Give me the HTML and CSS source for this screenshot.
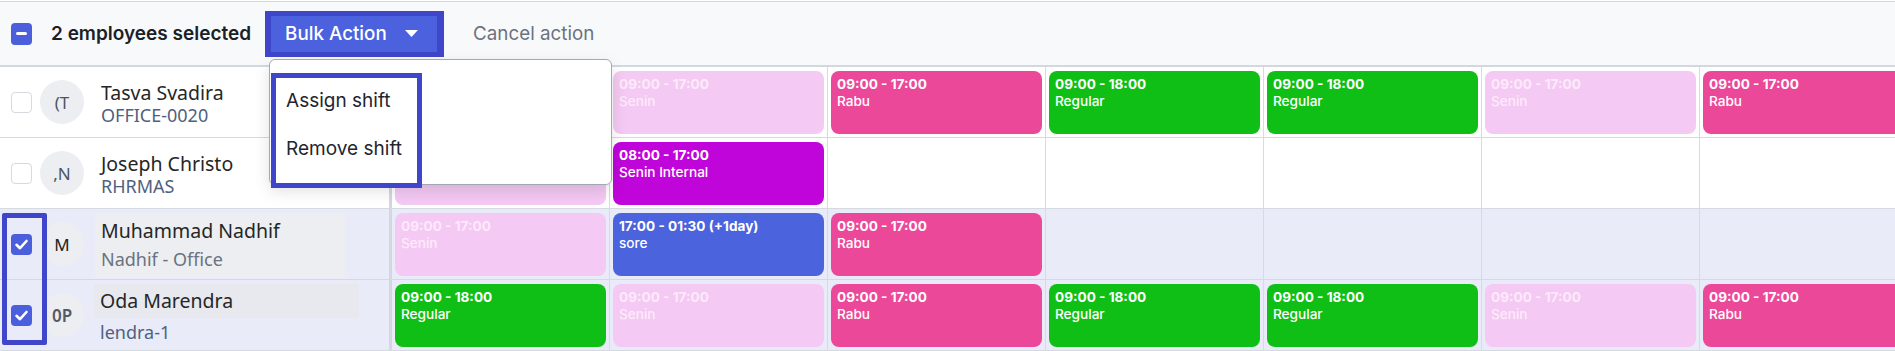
FILE: index.html
```html
<!DOCTYPE html>
<html lang="en">
<head>
<meta charset="utf-8">
<title>Shift schedule</title>
<link rel="stylesheet" href="styles.css">
</head>
<body>
<div class="app">
  <div class="toolbar">
    <span class="cb cb-ind"><span class="dash"></span></span>
    <span class="sel-count">2 employees selected</span>
    <div class="bulk">
      <button class="bulk-btn">Bulk Action
        <svg class="caret" width="13" height="7" viewBox="0 0 13 7"><path d="M0 0 H13 L6.5 7 Z" fill="#fff"/></svg>
      </button>
      <div class="menu">
        <div class="menu-mark">
          <div class="menu-item">Assign shift</div>
          <div class="menu-item">Remove shift</div>
        </div>
      </div>
    </div>
    <span class="cancel">Cancel action</span>
  </div>

  <div class="rows">
    <div class="row">
      <div class="emp">
        <span class="cb"></span>
        <span class="avatar">(T</span>
        <div class="info">
          <div class="name">Tasva Svadira</div>
          <div class="sub">OFFICE-0020</div>
        </div>
      </div>
      <div class="day"><div class="shift light"><b>09:00 - 17:00</b><span>Senin</span></div></div>
      <div class="day"><div class="shift light"><b>09:00 - 17:00</b><span>Senin</span></div></div>
      <div class="day"><div class="shift hot"><b>09:00 - 17:00</b><span>Rabu</span></div></div>
      <div class="day"><div class="shift green"><b>09:00 - 18:00</b><span>Regular</span></div></div>
      <div class="day"><div class="shift green"><b>09:00 - 18:00</b><span>Regular</span></div></div>
      <div class="day"><div class="shift light"><b>09:00 - 17:00</b><span>Senin</span></div></div>
      <div class="day"><div class="shift hot"><b>09:00 - 17:00</b><span>Rabu</span></div></div>
    </div>

    <div class="row">
      <div class="emp">
        <span class="cb"></span>
        <span class="avatar">,N</span>
        <div class="info">
          <div class="name">Joseph Christo</div>
          <div class="sub">RHRMAS</div>
        </div>
      </div>
      <div class="day"><div class="shift light"><b>09:00 - 17:00</b><span>Senin</span></div></div>
      <div class="day"><div class="shift purple"><b>08:00 - 17:00</b><span>Senin Internal</span></div></div>
      <div class="day"></div>
      <div class="day"></div>
      <div class="day"></div>
      <div class="day"></div>
      <div class="day"></div>
    </div>

    <div class="row selected">
      <div class="emp">
        <span class="cb checked"><svg width="21" height="21" viewBox="0 0 21 21"><path d="M5.5 10.8 L9 14.2 L15.5 7" fill="none" stroke="#fff" stroke-width="2.6" stroke-linecap="round" stroke-linejoin="round"/></svg></span>
        <span class="avatar dark">M</span>
        <div class="info info-box">
          <div class="name">Muhammad Nadhif</div>
          <div class="sub sub-gap">Nadhif - Office</div>
        </div>
      </div>
      <div class="day"><div class="shift light"><b>09:00 - 17:00</b><span>Senin</span></div></div>
      <div class="day"><div class="shift blue"><b>17:00 - 01:30 (+1day)</b><span>sore</span></div></div>
      <div class="day"><div class="shift hot"><b>09:00 - 17:00</b><span>Rabu</span></div></div>
      <div class="day"></div>
      <div class="day"></div>
      <div class="day"></div>
      <div class="day"></div>
    </div>

    <div class="row selected">
      <div class="emp">
        <span class="cb checked"><svg width="21" height="21" viewBox="0 0 21 21"><path d="M5.5 10.8 L9 14.2 L15.5 7" fill="none" stroke="#fff" stroke-width="2.6" stroke-linecap="round" stroke-linejoin="round"/></svg></span>
        <span class="avatar bold">0P</span>
        <div class="info info-top">
          <div class="name name-box">Oda Marendra</div>
          <div class="sub sub-pad">lendra-1</div>
        </div>
      </div>
      <div class="day"><div class="shift green"><b>09:00 - 18:00</b><span>Regular</span></div></div>
      <div class="day"><div class="shift light"><b>09:00 - 17:00</b><span>Senin</span></div></div>
      <div class="day"><div class="shift hot"><b>09:00 - 17:00</b><span>Rabu</span></div></div>
      <div class="day"><div class="shift green"><b>09:00 - 18:00</b><span>Regular</span></div></div>
      <div class="day"><div class="shift green"><b>09:00 - 18:00</b><span>Regular</span></div></div>
      <div class="day"><div class="shift light"><b>09:00 - 17:00</b><span>Senin</span></div></div>
      <div class="day"><div class="shift hot"><b>09:00 - 17:00</b><span>Rabu</span></div></div>
    </div>

    <div class="cb-mark"></div>
  </div>
</div>
</body>
</html>
```

FILE: styles.css
```css
* { box-sizing: border-box; }
html, body { margin: 0; padding: 0; }
body {
  width: 1895px;
  height: 351px;
  overflow: hidden;
  background: #ffffff;
  font-family: Inter, "Liberation Sans", sans-serif;
  color: #1f2530;
}
.app { width: 1895px; }

/* toolbar */
.toolbar {
  margin-top: 1px;
  height: 66px;
  border-top: 1px solid #d6d8db;
  border-bottom: 2px solid #d3d8df;
  background: #f8f9fb;
  display: flex;
  align-items: center;
  padding-left: 11px;
  position: relative;
  z-index: 5;
}
.cb {
  width: 21px;
  height: 21px;
  flex: 0 0 21px;
  border: 1.5px solid #d6d9de;
  border-radius: 4px;
  background: #fff;
  display: flex;
  align-items: center;
  justify-content: center;
}
.cb-ind {
  height: 22px;
  border: none;
  background: #4b5fdc;
}
.cb-ind .dash {
  width: 11px;
  height: 3px;
  border-radius: 2px;
  background: #fff;
}
.cb.checked {
  border: none;
  background: #4b5fdc;
}
.sel-count {
  margin-left: 19px;
  font-size: 19px;
  font-weight: 600;
  color: #1b1f27;
}
.bulk {
  margin-left: 14px;
  position: relative;
}
.bulk-btn {
  width: 179px;
  height: 46px;
  border: 5px solid #3f46c9;
  border-left-width: 6px;
  border-right-width: 7px;
  background: #4c61dd;
  color: #fff;
  font-family: Inter, "Liberation Sans", sans-serif;
  font-size: 18.8px;
  font-weight: 500;
  display: flex;
  align-items: center;
  padding: 0 0 0 14px;
  margin: 0;
}
.caret { margin-left: 18px; }
.cancel {
  margin-left: 29px;
  font-size: 18.8px;
  color: #6b7280;
}

/* dropdown */
.menu {
  position: absolute;
  left: 4px;
  top: 48px;
  width: 343px;
  height: 126px;
  background: #fff;
  border: 1px solid #a3a9b3;
  border-radius: 6px;
  box-shadow: 0 6px 16px rgba(0, 0, 0, 0.12);
}
.menu-mark {
  margin-top: 13px;
  margin-left: 1px;
  width: 151px;
  height: 115px;
  border: 5px solid #3f46c9;
  padding-left: 10px;
}
.menu-item {
  line-height: 48px;
  font-size: 19px;
  color: #1f2530;
  white-space: nowrap;
}
.menu-item:first-child { margin-top: -1px; }

/* rows */
.rows { position: relative; }
.row {
  display: flex;
  height: 71px;
  border-bottom: 1px solid #d5d9e0;
}
.row.selected { background: #e9ebf9; }
.emp {
  width: 392px;
  flex: 0 0 392px;
  border-right: 3px solid #d3d7de;
  display: flex;
  align-items: center;
  padding-left: 11px;
}
.avatar {
  width: 44px;
  height: 44px;
  flex: 0 0 44px;
  margin-left: 8px;
  border-radius: 50%;
  background: #eceef1;
  display: flex;
  align-items: center;
  justify-content: center;
  font-family: "Noto Sans", sans-serif;
  font-size: 17px;
  color: #4b5563;
}
.avatar.dark { color: #222; }
.avatar.bold { font-weight: 600; color: #555b66; }
.info {
  margin-left: 17px;
  font-family: "Noto Sans", sans-serif;
  padding-top: 4px;
}
.name {
  font-size: 19.5px;
  line-height: 22px;
  color: #262626;
  white-space: nowrap;
}
.sub {
  font-size: 18px;
  line-height: 22px;
  color: #4f6180;
  white-space: nowrap;
}
.info-box {
  align-self: flex-start;
  margin-top: 4px;
  margin-left: 11px;
  width: 250px;
  height: 65px;
  background: #eceef1;
  padding: 7px 0 0 6px;
}
.info-box .sub { color: #6b7280; }
.sub-gap { margin-top: 6px; }
.info-top {
  align-self: flex-start;
  margin-top: 4px;
  margin-left: 10px;
  padding-top: 0;
}
.name-box {
  width: 265px;
  height: 34px;
  line-height: 34px;
  background: #e7e9ef;
  padding-left: 6px;
}
.sub-pad { padding-left: 6px; margin-top: 3px; }

.day {
  width: 218px;
  flex: 0 0 218px;
  border-right: 1px solid #d7dae0;
  padding: 4px 3px 3px 3px;
}
.shift {
  height: 100%;
  border-radius: 8px;
  padding: 5px 6px;
  font-family: Inter, "Liberation Sans", sans-serif;
  font-size: 13.6px;
  line-height: 17px;
  display: flex;
  flex-direction: column;
  color: #fff;
}
.shift b { font-weight: 700; white-space: nowrap; }
.shift span { font-weight: 500; }
.shift.light { background: #f4c9f3; color: #fde9fb; }
.shift.hot { background: #ec4899; }
.shift.green { background: #10bf16; }
.shift.purple { background: #c005da; }
.shift.blue { background: #4b63dd; }

.cb-mark {
  position: absolute;
  left: 2px;
  top: 146px;
  width: 45px;
  height: 132px;
  border: 5px solid #3f46c9;
  border-radius: 2px;
}
```
